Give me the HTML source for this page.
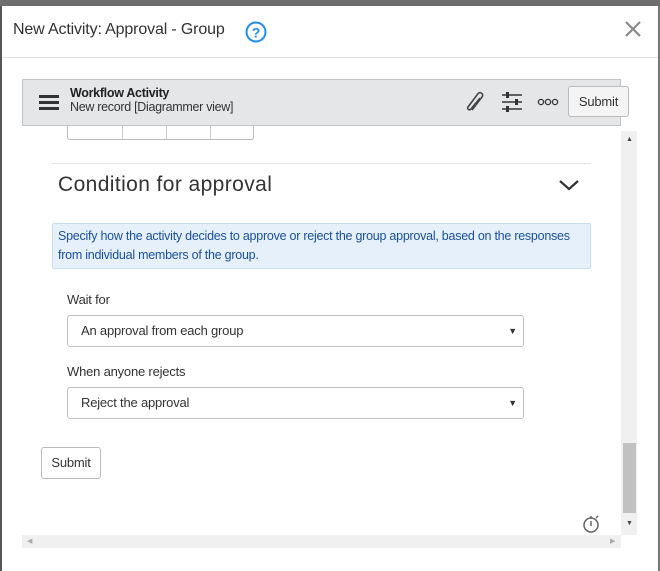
<!DOCTYPE html>
<html><head><style>
*{box-sizing:border-box;margin:0;padding:0}
body{width:660px;height:571px;overflow:hidden;background:#777;font-family:"Liberation Sans",sans-serif;position:relative}
.abs{position:absolute}
.t{letter-spacing:-0.2px}
</style></head><body>
<div class="abs" style="left:0;top:0;width:660px;height:7px;background:#6e6e6e"></div>
<div class="abs" style="left:2px;top:6px;width:656px;height:565px;background:#fff"></div>
<div class="abs" style="left:13px;top:21px;font-size:16px;color:#333;letter-spacing:-0.15px">New Activity: Approval - Group</div>
<svg class="abs" style="left:245px;top:21px" width="22" height="22"><circle cx="11" cy="11" r="9.5" fill="none" stroke="#1f8ceb" stroke-width="2"/><text x="11" y="16.5" font-size="14" font-weight="bold" text-anchor="middle" fill="#1f8ceb" font-family="Liberation Sans">?</text></svg>
<svg class="abs" style="left:624px;top:20px" width="18" height="18"><path d="M2 2L16 16M16 2L2 16" stroke="#8a8a8a" stroke-width="2.2"/></svg>
<div class="abs" style="left:2px;top:57px;width:656px;height:1px;background:#e2e2e2"></div>

<div class="abs" style="left:22px;top:79px;width:599px;height:47px;background:#e4e6e8;border:1px solid #c4c4c4"></div>
<div class="abs" style="left:39px;top:95px;width:20px;height:3px;background:#333"></div>
<div class="abs" style="left:39px;top:101px;width:20px;height:3px;background:#333"></div>
<div class="abs" style="left:39px;top:107px;width:20px;height:3px;background:#333"></div>
<div class="abs" style="left:70px;top:86px;font-size:12.5px;font-weight:bold;color:#222;letter-spacing:-0.3px">Workflow Activity</div>
<div class="abs" style="left:70px;top:100px;font-size:12.5px;color:#333;letter-spacing:-0.3px">New record [Diagrammer view]</div>
<svg class="abs" style="left:463px;top:90px" width="24" height="24"><path d="M9 20L19 7a2.6 2.6 0 0 0-4-3.4L5 17a1.8 1.8 0 0 0 3 2L17 8" fill="none" stroke="#444" stroke-width="1.6"/></svg>
<svg class="abs" style="left:500px;top:91px" width="24" height="22"><path d="M2 4H22M2 11H22M2 18H22" stroke="#333" stroke-width="1.6"/><rect x="6" y="1" width="3" height="6" fill="#333"/><rect x="15" y="8" width="3" height="6" fill="#333"/><rect x="6" y="15" width="3" height="6" fill="#333"/></svg>
<svg class="abs" style="left:537px;top:97px" width="22" height="10"><circle cx="4" cy="5" r="2.6" fill="none" stroke="#333" stroke-width="1.3"/><circle cx="11" cy="5" r="2.6" fill="none" stroke="#333" stroke-width="1.3"/><circle cx="18" cy="5" r="2.6" fill="none" stroke="#333" stroke-width="1.3"/></svg>
<div class="abs t" style="left:568px;top:86px;width:61px;height:31px;border:1px solid #bbb;border-radius:3px;background:#f4f4f4;font-size:13px;color:#333;text-align:center;line-height:29px">Submit</div>

<div class="abs" style="left:67px;top:126px;width:187px;height:14px;border:1px solid #bbb;border-top:none;border-radius:0 0 3px 3px"></div>
<div class="abs" style="left:122px;top:126px;width:1px;height:13px;background:#ccc"></div>
<div class="abs" style="left:166px;top:126px;width:1px;height:13px;background:#ccc"></div>
<div class="abs" style="left:210px;top:126px;width:1px;height:13px;background:#ccc"></div>
<div class="abs" style="left:52px;top:163px;width:539px;height:1px;background:#e2e2e2"></div>
<div class="abs" style="left:58px;top:173px;font-size:21px;color:#333;letter-spacing:0.4px">Condition for approval</div>
<svg class="abs" style="left:558px;top:178px" width="22" height="14"><path d="M2 3L11 11L20 3" fill="none" stroke="#333" stroke-width="2.2"/></svg>

<div class="abs" style="left:52px;top:223px;width:539px;height:46px;background:#e5f0fb;border:1px solid #c6ddf4;border-radius:2px;padding:3px 5px 3px 5px;font-size:12.5px;line-height:19px;color:#1a4f9c;letter-spacing:-0.25px"><span style="white-space:nowrap">Specify how the activity decides to approve or reject the group approval, based on the responses</span><br>from individual members of the group.</div>

<div class="abs t" style="left:67px;top:292px;font-size:13px;color:#333">Wait for</div>
<div class="abs t" style="left:67px;top:315px;width:457px;height:32px;border:1px solid #c2c2c2;border-radius:3px;font-size:13px;color:#333;line-height:30px;padding-left:13px">An approval from each group<span style="position:absolute;right:6px;font-size:9px">▼</span></div>
<div class="abs t" style="left:67px;top:364px;font-size:13px;color:#333">When anyone rejects</div>
<div class="abs t" style="left:67px;top:387px;width:457px;height:32px;border:1px solid #c2c2c2;border-radius:3px;font-size:13px;color:#333;line-height:30px;padding-left:13px">Reject the approval<span style="position:absolute;right:6px;font-size:9px">▼</span></div>

<div class="abs t" style="left:41px;top:447px;width:60px;height:32px;border:1px solid #bbb;border-radius:3px;font-size:13px;color:#333;text-align:center;line-height:30px">Submit</div>

<div class="abs" style="left:621px;top:131px;width:16px;height:404px;background:#f0f0f0"></div>
<div class="abs" style="left:623px;top:443px;width:13px;height:70px;background:#c1c1c1"></div>
<div class="abs" style="left:626px;top:136px;font-size:7px;color:#444">▲</div>
<div class="abs" style="left:626px;top:520px;font-size:7px;color:#444">▼</div>
<div class="abs" style="left:22px;top:535px;width:599px;height:13px;background:#f0f0f0"></div>
<div class="abs" style="left:27px;top:537px;font-size:7px;color:#aaa">◀</div>
<div class="abs" style="left:610px;top:537px;font-size:7px;color:#aaa">▶</div>
<svg class="abs" style="left:582px;top:513px" width="20" height="22"><circle cx="9" cy="12" r="7" fill="none" stroke="#666" stroke-width="1.5"/><path d="M9 3V6M9 8V13M14 5l2-2" stroke="#666" stroke-width="1.5"/></svg>
<div class="abs" style="left:0;top:6px;width:2px;height:565px;background:#555"></div>
</body></html>
